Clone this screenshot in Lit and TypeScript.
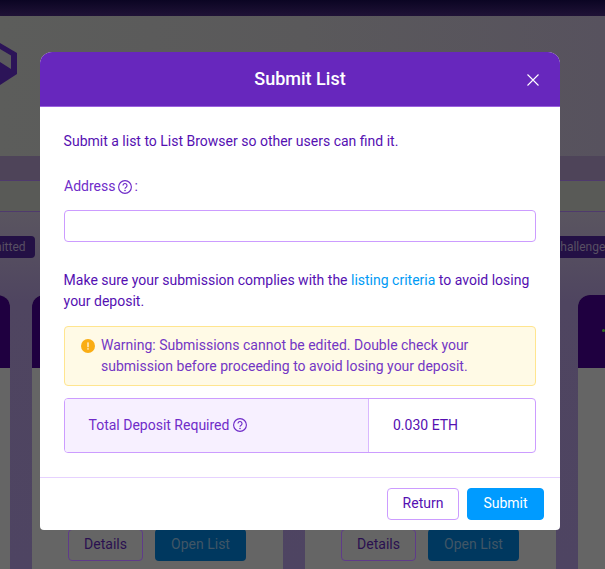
import { LitElement, html, css, svg } from "lit";
import { customElement } from "lit/decorators.js";

const help = svg`<svg class="help" viewBox="0 0 14 14" width="14" height="14" fill="none" stroke="currentColor"><circle cx="7" cy="7" r="6.4" stroke-width="1.15"/><path d="M5 5.5a2 2 0 1 1 3.1 1.7c-.7.4-1.1.8-1.1 1.6" stroke-width="1.15"/><circle cx="7" cy="10.5" r=".8" fill="currentColor" stroke="none"/></svg>`;

@customElement("app-root")
export class AppRoot extends LitElement {
  static styles = css`
    :host { display: block; position: relative; width: 605px; height: 569px; overflow: hidden; font-family: Roboto, "Liberation Sans", sans-serif; font-size: 14px; line-height: 21px; background: #4f4560; }
    .page { display: flex; flex-direction: column; height: 569px; }
    .topbar { height: 16px; flex: none; background: linear-gradient(180deg, #0b0523, #1f1236); }
    .hero { height: 140px; flex: none; background: linear-gradient(90deg, #5c5d5b, #5a595b 50%, #57525e); display: flex; align-items: flex-start; }
    .logo { margin: 26px 0 0 -17px; display: block; }
    .band { height: 24px; flex: none; background: #4e4459; border-bottom: 1px solid #4f3a6d; }
    .filters { height: 30px; flex: none; background: #595a57; border-bottom: 1px solid #4f3a6d; }
    .content { flex: 1; display: flex; flex-direction: column; background: linear-gradient(180deg, #5a5560, #4f4560 25%, #4e4462); min-height: 0; }
    .tags { height: 83px; flex: none; display: flex; justify-content: space-between; align-items: flex-start; padding-top: 24px; box-sizing: border-box; font-size: 12px; }
    .tag { height: 22px; display: flex; align-items: center; background: #231045; color: #595063; border-radius: 0 4px 4px 0; padding-right: 9px; line-height: 22px; }
    .cut { margin-left: -5px; }
    .tag.right { border-radius: 4px 0 0 4px; padding: 0 0 0 9px; width: 60px; box-sizing: border-box; overflow: hidden; white-space: nowrap; }
    .cards { display: flex; gap: 22px; margin-left: -241px; flex: 1; min-height: 0; }
    .card { width: 251px; flex: none; display: flex; flex-direction: column; background: #656565; border-radius: 12px 12px 0 0; }
    .card-head { height: 73px; flex: none; background: #1f0040; border-radius: 12px 12px 0 0; position: relative; }
    .dot { position: absolute; left: 24px; top: 34px; width: 3px; height: 3px; border-radius: 50%; background: #2f6d20; }
    .card-body { flex: 1; display: flex; align-items: flex-end; gap: 12px; padding: 0 0 8px 36px; }
    .btn-d { box-sizing: border-box; height: 32px; width: 75px; padding-bottom: 2px; border: 1px solid #5f3b8a; border-radius: 4px; color: #2a1050; display: flex; align-items: center; justify-content: center; }
    .btn-o { box-sizing: border-box; height: 32px; width: 91px; padding-bottom: 2px; border-radius: 4px; background: #00385f; color: #405666; display: flex; align-items: center; justify-content: center; }

    .modal { position: absolute; left: 40px; top: 52px; width: 520px; height: 478px; background: #fff; border-radius: 12px 12px 4px 4px; display: flex; flex-direction: column; overflow: hidden; color: #5510b2; }
    header { flex: none; box-sizing: border-box; height: 55px; padding-bottom: 2px; background: #6727bd; border-bottom: 1px solid #9a62de; position: relative; display: flex; align-items: center; justify-content: center; color: #fff; font-size: 18px; font-weight: 500; }
    .close { position: absolute; right: 21px; top: 22px; display: block; }
    .body { flex: 1; padding: 24px 24px 0; display: flex; flex-direction: column; }
    .intro { margin: 0 0 0 -0.4px; }
    .label { margin-top: 24px; color: #6f2cc9; display: flex; align-items: center; gap: 3px; height: 21px; }
    .colon { margin-left: -1px; }
    .help { display: block; }
    input { margin-top: 13px; box-sizing: border-box; width: 472px; height: 32px; border: 1px solid #cc9cff; border-radius: 4px; outline: none; padding: 0 11px; background: #fff; font: inherit; }
    .criteria { margin: 28px 0 0 -0.4px; }
    a { color: #009bf5; text-decoration: none; }
    .warn { margin-top: 14px; box-sizing: border-box; height: 60px; background: #fffae6; border: 1px solid #ffe58f; border-radius: 4px; padding: 8px 16px; display: flex; gap: 6px; color: #7336c4; }
    .warn svg { flex: none; margin-top: 4px; display: block; }
    .deposit { margin-top: 12px; box-sizing: border-box; height: 55px; border: 1px solid #cc9cff; border-radius: 4px; display: flex; overflow: hidden; }
    .dep-l { width: 304px; flex: none; box-sizing: border-box; background: #f7f0ff; border-right: 1px solid #d9b8ff; padding: 0 0 1px 23.5px; display: flex; align-items: center; gap: 4px; color: #6f2cc9; }
    .dep-r { flex: 1; padding: 0 0 1px 24px; display: flex; align-items: center; }
    footer { height: 53px; flex: none; box-sizing: border-box; border-top: 1px solid #e6d2ff; padding: 10px 16px; display: flex; justify-content: flex-end; gap: 8px; }
    button { height: 32px; box-sizing: border-box; border-radius: 4px; font: inherit; cursor: pointer; padding: 0 0 2px; }
    .ret { width: 72px; background: #fff; border: 1px solid #cc9cff; color: #5510b2; }
    .sub { width: 77px; background: #009bff; border: 1px solid #009bff; color: #fff; }
  `;

  card(dot = false) {
    return html`<div class="card"><div class="card-head">${dot ? html`<span class="dot"></span>` : ""}</div>
      <div class="card-body"><div class="btn-d">Details</div><div class="btn-o">Open List</div></div></div>`;
  }

  render() {
    return html`
      <div class="page">
        <div class="topbar"></div>
        <div class="hero">
          <svg class="logo" width="34" height="44" viewBox="0 0 34 44" fill="none">
            <path d="M17 1 L34 11 V32 L17 43 L0 32 V11 Z" fill="#2c1458"/>
            <path d="M17 7 L28 13.5 V27 L17 20 L6 27 V13.5 Z" fill="#5a5a5c"/>
          </svg>
        </div>
        <div class="band"></div>
        <div class="filters"></div>
        <div class="content">
          <div class="tags"><span class="tag"><span class="cut">nitted</span></span><span class="tag right">challenge</span></div>
          <div class="cards">${this.card()}${this.card()}${this.card()}${this.card(true)}</div>
        </div>
      </div>
      <div class="modal" role="dialog">
        <header>Submit List
          <svg class="close" width="12" height="12" viewBox="0 0 12 12" stroke="#fff" stroke-width="1.1"><path d="M.5.5l11 11M11.5.5l-11 11"/></svg>
        </header>
        <div class="body">
          <p class="intro">Submit a list to List Browser so other users can find it.</p>
          <div class="label">Address${help}<span class="colon">:</span></div>
          <input type="text" />
          <p class="criteria">Make sure your submission complies with the <a>listing criteria</a> to avoid losing your deposit.</p>
          <div class="warn">
            <svg width="14" height="14" viewBox="0 0 14 14"><circle cx="7" cy="7" r="7" fill="#faad14"/><rect x="6.3" y="3.4" width="1.4" height="4.8" fill="#fff" opacity=".85"/><rect x="6.3" y="9.2" width="1.4" height="1.4" fill="#fff" opacity=".85"/></svg>
            <span>Warning: Submissions cannot be edited. Double check your submission before proceeding to avoid losing your deposit.</span>
          </div>
          <div class="deposit">
            <div class="dep-l">Total Deposit Required ${help}</div>
            <div class="dep-r">0.030 ETH</div>
          </div>
        </div>
        <footer><button class="ret">Return</button><button class="sub">Submit</button></footer>
      </div>`;
  }
}
